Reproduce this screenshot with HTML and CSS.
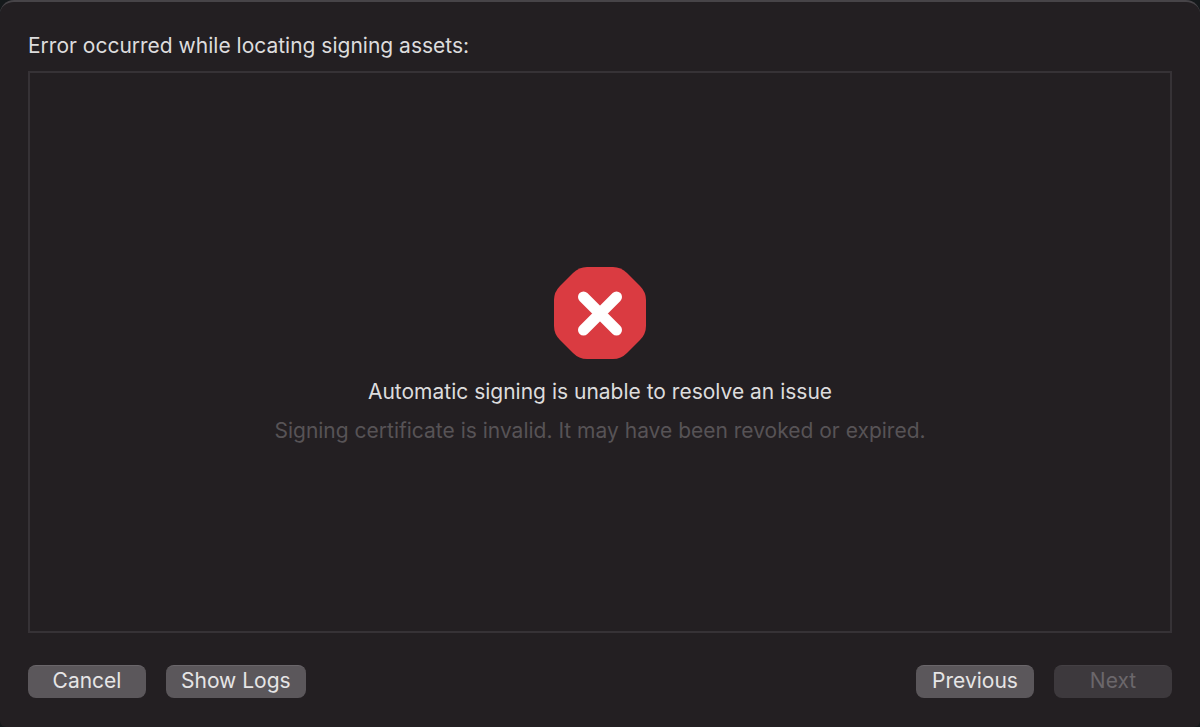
FILE: index.html
```
<!DOCTYPE html>
<html lang="en">
<head>
  <meta charset="UTF-8">
  <meta name="viewport" content="width=device-width, initial-scale=1.0">
  <title>Signing Error</title>
  <link rel="stylesheet" href="styles.css">
</head>
<body>
  <main class="dialog">
    <h1 class="title">Error occurred while locating signing assets:</h1>
    <section class="panel">
      <svg class="error-icon" viewBox="0 0 92 92" aria-hidden="true">
        <path class="octagon" d="M33 0H59Q67 0 73 6L86 19Q92 25 92 33V59Q92 67 86 73L73 86Q67 92 59 92H33Q25 92 19 86L6 73Q0 67 0 59V33Q0 25 6 19L19 6Q25 0 33 0Z"/>
        <path class="cross" d="M29.5 30L62.5 63M62.5 30L29.5 63"/>
      </svg>
      <p class="message">Automatic signing is unable to resolve an issue</p>
      <p class="detail">Signing certificate is invalid. It may have been revoked or expired.</p>
    </section>
    <footer class="actions">
      <button type="button">Cancel</button>
      <button type="button">Show Logs</button>
      <button type="button" class="previous">Previous</button>
      <button type="button" disabled>Next</button>
    </footer>
  </main>
</body>
</html>
```

FILE: styles.css
```
* {
  box-sizing: border-box;
}
body {
  margin: 0;
  background: #15191b;
  font-family: Inter, "Liberation Sans", sans-serif;
  font-size: 21px;
  line-height: 28px;
  color: #dddcdd;
}
.dialog {
  display: flex;
  flex-direction: column;
  min-height: 100vh;
  padding: 30px 28px 29px;
  background: #231f22;
  border-top: 2px solid #474448;
  border-radius: 14px 14px 6px 6px;
}
.title {
  margin: 0 0 11px;
  font-size: 21px;
  font-weight: 400;
}
.panel {
  flex: 1;
  display: flex;
  flex-direction: column;
  align-items: center;
  justify-content: center;
  padding-top: 8px;
  border: 2px solid #363236;
  text-align: center;
}
.error-icon {
  width: 92px;
  height: 92px;
  margin-bottom: 19px;
}
.octagon {
  fill: #da3b41;
}
.cross {
  fill: none;
  stroke: #fff;
  stroke-width: 11;
  stroke-linecap: round;
}
.message {
  margin: 0 0 11px;
}
.detail {
  margin: 0;
  color: #575356;
}
.actions {
  display: flex;
  gap: 20px;
  margin-top: 32px;
}
.actions button {
  min-width: 118px;
  height: 33px;
  padding: 0 15px 2px;
  border: none;
  border-top: 1px solid #6a666a;
  border-radius: 8px;
  background: #5b575b;
  color: #e6e5e6;
  font: inherit;
}
.actions .previous {
  margin-left: auto;
}
.actions button:disabled {
  background: #3d393d;
  border-top-color: #444044;
  color: #6b676b;
}
```
